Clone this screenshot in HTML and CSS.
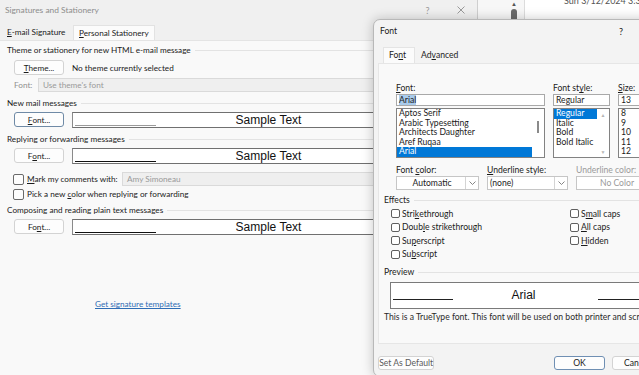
FILE: index.html
```html
<!DOCTYPE html>
<html lang="en">
<head>
    <meta charset="UTF-8">
    <title>Signatures and Stationery - Font</title>
    <link rel="stylesheet" href="styles.css">
</head>
<body>
    <!-- window behind both dialogs -->
    <div class="side-bar">
        <span class="side-arrow">&#9650;</span>
        <span class="side-thumb"></span>
    </div>
    <div class="date">Sun 3/12/2024 3:30 PM</div>

    <!-- Signatures and Stationery dialog -->
    <div class="back">
        <div class="titlebar">
            <span class="title">Signatures and Stationery</span>
            <span class="tb-btn">?</span>
            <span class="tb-btn">
                <svg width="8" height="8" viewBox="0 0 8 8"><path d="M0.5 0.5 L7.5 7.5 M7.5 0.5 L0.5 7.5" stroke="#9a9a9a" stroke-width="1"/></svg>
            </span>
        </div>
        <div class="tabs">
            <span class="tab"><u>E</u>-mail Signature</span>
            <span class="tab active"><u>P</u>ersonal Stationery</span>
        </div>
        <div class="panel">
            <div class="sec">Theme or stationery for new HTML e-mail message</div>
            <div class="row theme-row">
                <span class="btn"><u>T</u>heme...</span>
                <span>No theme currently selected</span>
            </div>
            <div class="row font-row">
                <span class="muted-label">Font:</span>
                <span class="field disabled">Use theme's font</span>
            </div>

            <div class="sec gap5">New mail messages</div>
            <div class="row sample-row">
                <span class="btn focus"><u>F</u>ont...</span>
                <span class="sample gray-line">Sample Text</span>
            </div>

            <div class="sec gap5">Replying or forwarding messages</div>
            <div class="row sample-row">
                <span class="btn">F<u>o</u>nt...</span>
                <span class="sample">Sample Text</span>
            </div>

            <div class="row check-row">
                <span class="check"></span>
                <span class="check-label"><u>M</u>ark my comments with:</span>
                <span class="field disabled">Amy Simoneau</span>
            </div>
            <div class="row check-row2">
                <span class="check"></span>
                <span class="check-text">Pick a new <u>c</u>olor when replying or forwarding</span>
            </div>

            <div class="sec gap4">Composing and reading plain text messages</div>
            <div class="row sample-row">
                <span class="btn">Fo<u>n</u>t...</span>
                <span class="sample">Sample Text</span>
            </div>

            <div class="link-row"><span class="link">Get signature templates</span></div>
        </div>
    </div>

    <!-- Font dialog -->
    <div class="dlg">
        <div class="dlg-title">
            <span class="title">Font</span>
            <span class="help">?</span>
        </div>
        <div class="dlg-tabs">
            <span class="dtab active">Fo<u>n</u>t</span>
            <span class="dtab">Ad<u>v</u>anced</span>
        </div>
        <div class="dlg-panel">
            <div class="fgrid">
                <div class="fcol">
                    <span class="flabel"><u>F</u>ont:</span>
                    <span class="finput"><span class="sel-text">Arial</span></span>
                    <div class="flist">
                        <div class="items">
                            <div class="item">Aptos Serif</div>
                            <div class="item">Arabic Typesetting</div>
                            <div class="item">Architects Daughter</div>
                            <div class="item">Aref Ruqaa</div>
                            <div class="item on">Arial</div>
                        </div>
                        <div class="vscroll thin"><span class="thumb"></span></div>
                    </div>
                </div>
                <div class="fcol">
                    <span class="flabel">Font st<u>y</u>le:</span>
                    <span class="finput">Regular</span>
                    <div class="flist">
                        <div class="items">
                            <div class="item on">Regular</div>
                            <div class="item">Italic</div>
                            <div class="item">Bold</div>
                            <div class="item">Bold Italic</div>
                        </div>
                        <div class="vscroll arrows"><span>&#9650;</span><span>&#9660;</span></div>
                    </div>
                </div>
                <div class="fcol">
                    <span class="flabel"><u>S</u>ize:</span>
                    <span class="finput">13</span>
                    <div class="flist">
                        <div class="items">
                            <div class="item">8</div>
                            <div class="item">9</div>
                            <div class="item">10</div>
                            <div class="item">11</div>
                            <div class="item">12</div>
                        </div>
                    </div>
                </div>
            </div>

            <div class="fgrid2">
                <div class="fcol">
                    <span class="flabel">Font <u>c</u>olor:</span>
                    <div class="dd">
                        <span class="dd-text center">Automatic</span>
                        <span class="dd-arrow"><svg width="7" height="4" viewBox="0 0 7 4"><path d="M0.5 0.5 L3.5 3.5 L6.5 0.5" fill="none" stroke="#777" stroke-width="0.9"/></svg></span>
                    </div>
                </div>
                <div class="fcol">
                    <span class="flabel"><u>U</u>nderline style:</span>
                    <div class="dd">
                        <span class="dd-text">(none)</span>
                        <span class="dd-arrow"><svg width="7" height="4" viewBox="0 0 7 4"><path d="M0.5 0.5 L3.5 3.5 L6.5 0.5" fill="none" stroke="#777" stroke-width="0.9"/></svg></span>
                    </div>
                </div>
                <div class="fcol">
                    <span class="flabel disabled-text">Underline color:</span>
                    <div class="dd">
                        <span class="dd-text center disabled-text">No Color</span>
                    </div>
                </div>
            </div>

            <div class="sec effects-sec">Effects</div>
            <div class="effects">
                <div class="ecol left">
                    <div class="chk"><span class="box"></span>Stri<u>k</u>ethrough</div>
                    <div class="chk"><span class="box"></span>Doub<u>l</u>e strikethrough</div>
                    <div class="chk"><span class="box"></span>Su<u>p</u>erscript</div>
                    <div class="chk"><span class="box"></span>Su<u>b</u>script</div>
                </div>
                <div class="ecol">
                    <div class="chk"><span class="box"></span>S<u>m</u>all caps</div>
                    <div class="chk"><span class="box"></span><u>A</u>ll caps</div>
                    <div class="chk"><span class="box"></span><u>H</u>idden</div>
                </div>
            </div>

            <div class="sec preview-sec">Preview</div>
            <div class="preview">Arial</div>
            <div class="note">This is a TrueType font. This font will be used on both printer and screen.</div>
        </div>
        <div class="dlg-buttons">
            <span class="btn wide">Set As Default</span>
            <span class="btn ok">OK</span>
            <span class="btn cancel">Cancel</span>
        </div>
    </div>
</body>
</html>
```

FILE: styles.css
```css
html, body {
    margin: 0;
    padding: 0;
}

body {
    position: relative;
    width: 639px;
    height: 375px;
    overflow: hidden;
    background: #ffffff;
    font-family: "Lato", "Liberation Sans", sans-serif;
    font-size: 8.2px;
    color: #1b1b1b;
}

u {
    text-decoration: underline;
    text-underline-offset: 1px;
}

/* window in the background */
.side-bar {
    position: absolute;
    left: 478px;
    top: 0;
    width: 46px;
    height: 20px;
    background: #f7f7f7;
    border-right: 1px solid #dcdcdc;
}

.side-arrow {
    position: absolute;
    left: 33px;
    top: 0;
    font-size: 6px;
    color: #555;
}

.side-thumb {
    position: absolute;
    left: 33px;
    top: 9px;
    width: 6px;
    height: 11px;
    border-radius: 3px 3px 0 0;
    background: #6b6b6b;
}

.date {
    position: absolute;
    left: 564px;
    top: -5px;
    font-size: 9px;
    color: #555;
    white-space: nowrap;
}

/* Signatures and Stationery */
.back {
    position: absolute;
    left: 0;
    top: 0;
    width: 477px;
    height: 375px;
    display: flex;
    flex-direction: column;
    background: #f0f0f0;
    border-right: 1px solid #cfcfcf;
}

.titlebar {
    display: flex;
    align-items: center;
    height: 20px;
}

.titlebar .title {
    flex: 1;
    padding-left: 5px;
    color: #8d8d8d;
    font-size: 8.4px;
}

.tb-btn {
    display: flex;
    justify-content: center;
    align-items: center;
    width: 33px;
    color: #9a9a9a;
    font-size: 9px;
}

.tabs {
    display: flex;
    align-items: flex-end;
    height: 20px;
    padding-left: 3px;
}

.tab {
    box-sizing: border-box;
    width: 70px;
    height: 15px;
    line-height: 15px;
    padding-left: 4px;
    white-space: nowrap;
}

.tab.active {
    width: 82px;
    padding-left: 5px;
    background: #fbfbfb;
    border: 1px solid #e2e2e2;
    border-bottom: none;
    line-height: 14px;
}

.panel {
    flex: 1;
    display: flex;
    flex-direction: column;
    padding: 3px 13px 0 7px;
    background: #f9f9f9;
    border-top: 1px solid #e4e4e4;
}

.sec {
    display: flex;
    align-items: center;
    gap: 4px;
    height: 12px;
    white-space: nowrap;
}

.sec::after {
    content: "";
    flex: 1;
    border-top: 1px solid #e3e3e3;
}

.gap5 { margin-top: 5px; }
.gap4 { margin-top: 4px; }

.row {
    display: flex;
    align-items: center;
    padding-left: 7px;
}

.btn {
    box-sizing: border-box;
    display: flex;
    justify-content: center;
    align-items: center;
    width: 50px;
    height: 15px;
    background: #fdfdfd;
    border: 1px solid #d3d3d3;
    border-radius: 3px;
    color: #1b1b1b;
}

.btn.focus {
    border-color: #6f8aa6;
}

.theme-row {
    margin-top: 4px;
    height: 15px;
    gap: 8px;
}

.font-row {
    margin-top: 3px;
    height: 14px;
}

.muted-label {
    width: 24px;
    color: #8f8f8f;
}

.field {
    box-sizing: border-box;
    flex: 1;
    height: 14px;
    line-height: 12px;
    padding-left: 4px;
    border: 1px solid #dadada;
}

.field.disabled {
    background: #efefef;
    color: #9a9a9a;
}

.sample-row {
    margin-top: 3px;
    height: 16px;
    align-items: flex-start;
    gap: 8px;
}

.sample {
    position: relative;
    box-sizing: border-box;
    flex: 1;
    height: 16px;
    line-height: 14px;
    text-align: center;
    background: #ffffff;
    border-top: 1px solid #707070;
    border-bottom: 1px solid #707070;
    border-left: 1px solid #8a8a8a;
    font-family: "Liberation Sans", Arial, sans-serif;
    font-size: 12px;
    color: #111;
}

.sample::before {
    content: "";
    position: absolute;
    left: 2px;
    bottom: 1px;
    width: 81px;
    height: 1px;
    background: #111;
}

.sample.gray-line::before {
    background: #9a9a9a;
}

.check {
    box-sizing: border-box;
    width: 11px;
    height: 11px;
    background: #fdfdfd;
    border: 1px solid #6a6a6a;
    border-radius: 2px;
}

.check-row {
    margin-top: 8px;
    height: 14px;
    padding-left: 6px;
}

.check-label {
    width: 95px;
    margin-left: 3px;
    white-space: nowrap;
}

.check-row2 {
    margin-top: 2px;
    height: 12px;
    padding-left: 6px;
}

.check-text {
    margin-left: 3px;
    white-space: nowrap;
}

.link-row {
    margin-top: 63px;
    height: 12px;
    line-height: 12px;
    padding-left: 88px;
}

.link {
    color: #2f6db5;
    text-decoration: underline;
    text-underline-offset: 1px;
}

/* Font dialog */
.dlg {
    position: absolute;
    left: 373px;
    top: 19px;
    box-sizing: border-box;
    width: 290px;
    height: 358px;
    display: flex;
    flex-direction: column;
    background: #f3f3f3;
    border: 1px solid #b8b8b8;
    border-radius: 7px;
    box-shadow: 0 0 12px rgba(0, 0, 0, 0.22);
    font-size: 8.6px;
}

.dlg-title {
    display: flex;
    align-items: center;
    height: 22px;
}

.dlg-title .title {
    flex: 1;
    padding-left: 6px;
}

.help {
    width: 10px;
    margin-right: 36px;
    text-align: center;
    font-size: 9px;
}

.dlg-tabs {
    display: flex;
    align-items: flex-end;
    height: 21px;
    padding-left: 9px;
}

.dtab {
    box-sizing: border-box;
    height: 16px;
    line-height: 16px;
    padding-left: 6px;
    width: 45px;
}

.dtab.active {
    width: 32px;
    background: #fbfbfb;
    border: 1px solid #e4e4e4;
    border-bottom: none;
    line-height: 15px;
    padding-left: 5px;
}

.dlg-panel {
    box-sizing: border-box;
    height: 281px;
    margin: 0 4px;
    padding: 19px 0 0 5px;
    background: #f9f9f9;
    border: 1px solid #e6e6e6;
    display: flex;
    flex-direction: column;
}

.fgrid {
    display: grid;
    grid-template-columns: 149px 57px 50px;
    column-gap: 8px;
    margin-left: 12px;
}

.fcol {
    display: flex;
    flex-direction: column;
}

.flabel {
    height: 10px;
    line-height: 10px;
    white-space: nowrap;
}

.finput {
    box-sizing: border-box;
    height: 12px;
    margin-top: 1px;
    line-height: 10px;
    padding-left: 2px;
    background: #ffffff;
    border: 1px solid #a9a9a9;
}

.sel-text {
    background: #a9cbec;
}

.flist {
    box-sizing: border-box;
    display: flex;
    height: 50px;
    margin-top: 2px;
    background: #ffffff;
    border: 1px solid #828282;
}

.items {
    flex: 1;
}

.item {
    height: 9.6px;
    line-height: 9.6px;
    padding-left: 2px;
    white-space: nowrap;
    overflow: hidden;
}

.item.on {
    background: #0078d7;
    color: #ffffff;
}

.vscroll {
    width: 12px;
    display: flex;
    flex-direction: column;
    align-items: center;
}

.vscroll.thin .thumb {
    width: 2px;
    height: 12px;
    margin-top: 12px;
    background: #8a8a8a;
}

.vscroll.arrows {
    justify-content: space-between;
    font-size: 5px;
    color: #b5b5b5;
    padding: 3px 0 2px;
}

.fgrid2 {
    display: grid;
    grid-template-columns: 83px 81px 80px;
    column-gap: 8px;
    margin: 7px 0 0 12px;
}

.dd {
    box-sizing: border-box;
    display: flex;
    height: 14px;
    margin-top: 1px;
    background: #ffffff;
    border: 1px solid #c6c6c6;
}

.dd-text {
    flex: 1;
    line-height: 12px;
    padding-left: 2px;
}

.dd-text.center {
    text-align: center;
}

.dd-arrow {
    display: flex;
    justify-content: center;
    align-items: center;
    width: 12px;
    border-left: 1px solid #d4d4d4;
}

.disabled-text {
    color: #9a9a9a;
}

.effects-sec {
    height: 10px;
    margin-top: 5px;
}

.effects {
    display: flex;
    margin: 2px 0 0 7px;
}

.ecol.left {
    width: 179px;
}

.chk {
    display: flex;
    align-items: center;
    height: 13.5px;
    white-space: nowrap;
}

.box {
    box-sizing: border-box;
    width: 9px;
    height: 9px;
    margin-right: 2px;
    background: #ffffff;
    border: 1px solid #5f5f5f;
    border-radius: 2px;
}

.preview-sec {
    height: 10px;
    margin-top: 6px;
}

.preview {
    position: relative;
    box-sizing: border-box;
    height: 27px;
    margin: 5px 0 0 6px;
    line-height: 25px;
    text-align: center;
    background: #ffffff;
    border: 1px solid #7a7a7a;
    font-family: "Liberation Sans", Arial, sans-serif;
    font-size: 12px;
    color: #111;
}

.preview::before,
.preview::after {
    content: "";
    position: absolute;
    top: 16px;
    width: 60px;
    height: 1px;
    background: #222;
}

.preview::before { left: 2px; }
.preview::after { left: 207px; }

.note {
    height: 10px;
    line-height: 10px;
    margin-top: 3px;
    white-space: nowrap;
    color: #2a2a2a;
}

.dlg-buttons {
    display: flex;
    padding: 12px 0 0 4px;
}

.btn.wide {
    width: 57px;
    height: 14px;
    color: #5a5a5a;
}

.btn.ok {
    width: 51px;
    height: 14px;
    margin-left: 120px;
    border-color: #6f8fb3;
}

.btn.cancel {
    width: 51px;
    height: 14px;
    margin-left: 7px;
}
```
